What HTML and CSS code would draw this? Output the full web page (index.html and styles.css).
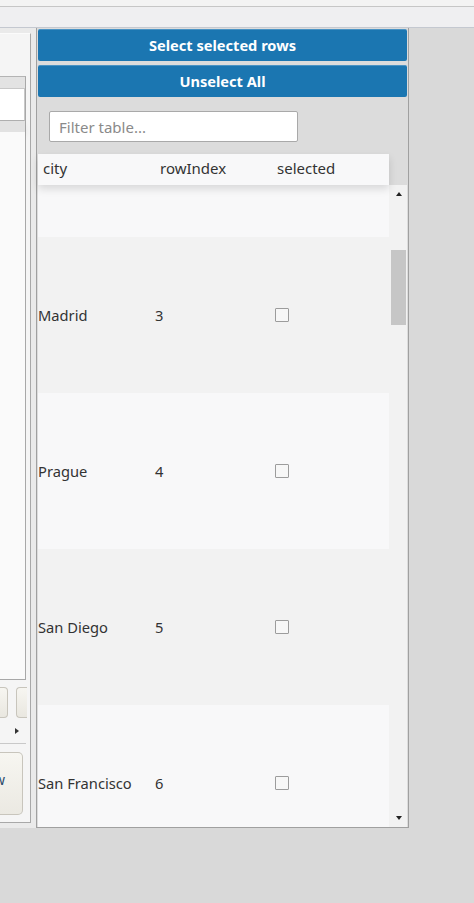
FILE: index.html
```html
<!DOCTYPE html>
<html lang="en">
<head>
<meta charset="utf-8">
<title>Table selection</title>
<link rel="stylesheet" href="styles.css">
</head>
<body>
<div class="chrome">
  <div class="chrome-top"></div>
  <div class="chrome-bar"></div>
</div>
<div class="main">
  <div class="left-col">
    <div class="left-panel">
      <div class="lp-top"></div>
      <div class="lp-box">
        <div class="lp-bar"></div>
        <div class="lp-field"></div>
        <div class="lp-band"></div>
        <div class="lp-fill"></div>
      </div>
      <div class="lp-btnrow">
        <div class="lp-btn lp-btn-a"></div>
        <div class="lp-btn lp-btn-b"></div>
      </div>
      <div class="lp-arrowrow"><span class="lp-arrow"></span></div>
      <div class="lp-sep"></div>
      <div class="lp-bigbtn"><span>New</span></div>
    </div>
  </div>
  <div class="right-panel">
    <button class="action">Select selected rows</button>
    <button class="action">Unselect All</button>
    <div class="content">
      <div class="filter-row">
        <input class="filter" type="text" placeholder="Filter table...">
      </div>
      <div class="table-head">
        <div class="th">city</div>
        <div class="th">rowIndex</div>
        <div class="th">selected</div>
      </div>
      <div class="body-wrap">
        <div class="rows">
          <div class="row row-light row-partial"></div>
          <div class="row row-dark">
            <div class="td">Madrid</div>
            <div class="td">3</div>
            <div class="td"><span class="check"></span></div>
          </div>
          <div class="row row-light">
            <div class="td">Prague</div>
            <div class="td">4</div>
            <div class="td"><span class="check"></span></div>
          </div>
          <div class="row row-dark">
            <div class="td">San Diego</div>
            <div class="td">5</div>
            <div class="td"><span class="check"></span></div>
          </div>
          <div class="row row-light">
            <div class="td">San Francisco</div>
            <div class="td">6</div>
            <div class="td"><span class="check"></span></div>
          </div>
        </div>
        <div class="scrollbar">
          <div class="sb-btn"><span class="tri-up"></span></div>
          <div class="sb-track"><div class="sb-thumb"></div></div>
          <div class="sb-btn"><span class="tri-down"></span></div>
        </div>
      </div>
    </div>
  </div>
</div>
</body>
</html>
```
FILE: styles.css
```css
* { box-sizing: border-box; }
html, body { margin: 0; padding: 0; }
body {
  background: #d9d9d9;
  font-family: "Noto Sans", "Open Sans", sans-serif;
  font-size: 14.7px;
  color: #333;
  width: 474px;
  height: 903px;
  overflow: hidden;
}

.chrome-top {
  height: 7px;
  background: #f3f3f3;
  border-bottom: 1px solid #c6c6c6;
}
.chrome-bar {
  height: 21px;
  background: #efeff1;
  border-bottom: 1px solid #c4c8d0;
}

.main {
  display: flex;
  align-items: stretch;
}

/* left, mostly cut-off panel */
.left-col {
  width: 36px;
  flex: none;
  background: #eaeaea;
}
.left-panel {
  margin-top: 5px;
  width: 31px;
  height: 790px;
  background: #f5f5f5;
  border-top: 1px solid #fbfbfb;
  border-right: 1px solid #a8a8a8;
  border-bottom: 1px solid #a8a8a8;
  display: flex;
  flex-direction: column;
}
.lp-top { height: 42px; }
.lp-box {
  width: 26px;
  height: 604px;
  border-top: 1px solid #b4b4b4;
  border-right: 1px solid #a8a8a8;
  border-bottom: 1px solid #a8a8a8;
  display: flex;
  flex-direction: column;
  background: #fafafa;
}
.lp-bar { height: 11px; background: #e3e3e3; }
.lp-field {
  height: 33px;
  background: #fff;
  border-top: 1px solid #c8c8c8;
  border-bottom: 1px solid #b0b0b0;
  border-right: 1px solid #c8c8c8;
}
.lp-band {
  height: 11px;
  background: #e2e2e2;
  box-shadow: 0 4px 6px rgba(0,0,0,0.08);
}
.lp-fill { flex: 1; background: #fafafa; }

.lp-btnrow {
  margin-top: 7px;
  height: 31px;
  display: flex;
  gap: 8px;
}
.lp-btn {
  height: 31px;
  background: linear-gradient(#f7f6f1, #e9e7e0);
  border: 1px solid #c8c5bc;
}
.lp-btn-a { width: 8px; border-left: none; border-radius: 0 4px 4px 0; }
.lp-btn-b { width: 11px; border-right: none; border-radius: 4px 0 0 4px; }

.lp-arrowrow {
  height: 25px;
  display: flex;
  align-items: center;
  padding-left: 15px;
}
.lp-arrow {
  width: 0;
  height: 0;
  border-top: 3px solid transparent;
  border-bottom: 3px solid transparent;
  border-left: 4px solid #333;
}
.lp-sep {
  width: 26px;
  height: 1px;
  background: #c9c9c9;
}
.lp-bigbtn {
  margin-top: 8px;
  width: 23px;
  height: 63px;
  border: 1px solid #c8c5bc;
  border-left: none;
  border-radius: 0 5px 5px 0;
  background: linear-gradient(#f7f6f1, #ebe9e2);
  display: flex;
  justify-content: flex-end;
  align-items: center;
  overflow: hidden;
  padding-right: 17px;
  padding-bottom: 8px;
  color: #2a4a6a;
  font-size: 14px;
}

/* right panel */
.right-panel {
  width: 373px;
  flex: none;
  height: 800px;
  border-left: 1px solid #a0a0a0;
  border-right: 1px solid #a0a0a0;
  border-bottom: 1px solid #a0a0a0;
  padding: 1px 1px 0 1px;
  display: flex;
  flex-direction: column;
  background: #dcdcdc;
}
.action {
  display: block;
  width: 100%;
  height: 32px;
  margin: 0 0 4px 0;
  padding: 0 0 2px 0;
  border: none;
  border-top: 1px solid #4a93c4;
  border-radius: 2px;
  background: #1b76b1;
  color: #fff;
  font-family: "Noto Sans", "Open Sans", sans-serif;
  font-weight: 700;
  font-size: 14.6px;
  text-align: center;
}
.action + .action { margin-bottom: 0; }

.content {
  flex: 1;
  display: flex;
  flex-direction: column;
  min-height: 0;
}
.filter-row {
  padding: 14px 0 12px 11px;
}
.filter {
  display: block;
  width: 249px;
  height: 31px;
  border: 1px solid #a9a9a9;
  border-radius: 2px;
  background: #fff;
  padding: 0 9px;
  font-family: "Noto Sans", "Open Sans", sans-serif;
  font-size: 15px;
  color: #333;
}
.filter::placeholder { color: #8a8a8a; }

.table-head {
  width: 351px;
  height: 31px;
  padding-bottom: 3px;
  display: grid;
  grid-template-columns: 117px 117px 117px;
  align-items: center;
  background: #f8f8f9;
  position: relative;
  z-index: 1;
  box-shadow: 0 4px 8px rgba(0,0,0,0.13);
}
.th { padding-left: 5px; white-space: nowrap; font-size: 15px; }

.body-wrap {
  flex: 1;
  display: flex;
  min-height: 0;
}
.rows {
  width: 351px;
  overflow: hidden;
}
.row {
  height: 156px;
  display: grid;
  grid-template-columns: 117px 117px 117px;
  align-items: center;
}
.row-partial { height: 52px; }
.row-light { background: #f8f8f9; }
.row-dark { background: #f2f2f2; }
.td { white-space: nowrap; display: flex; align-items: center; }
.check {
  display: block;
  width: 14px;
  height: 14px;
  margin-left: 3px;
  border: 1.5px solid #9c9c9c;
  border-radius: 1px;
  background: #f7f7f7;
}

.scrollbar {
  width: 18px;
  display: flex;
  flex-direction: column;
  background: #f2f2f2;
}
.sb-btn {
  height: 18px;
  display: flex;
  align-items: center;
  justify-content: center;
  padding-left: 2px;
}
.tri-up, .tri-down {
  width: 0;
  height: 0;
  border-left: 3.5px solid transparent;
  border-right: 3.5px solid transparent;
}
.tri-up { border-bottom: 4px solid #222; }
.tri-down { border-top: 4px solid #222; }
.sb-track { flex: 1; }
.sb-thumb {
  margin: 47px 1px 0 2px;
  height: 75px;
  background: #c6c6c6;
}
```
